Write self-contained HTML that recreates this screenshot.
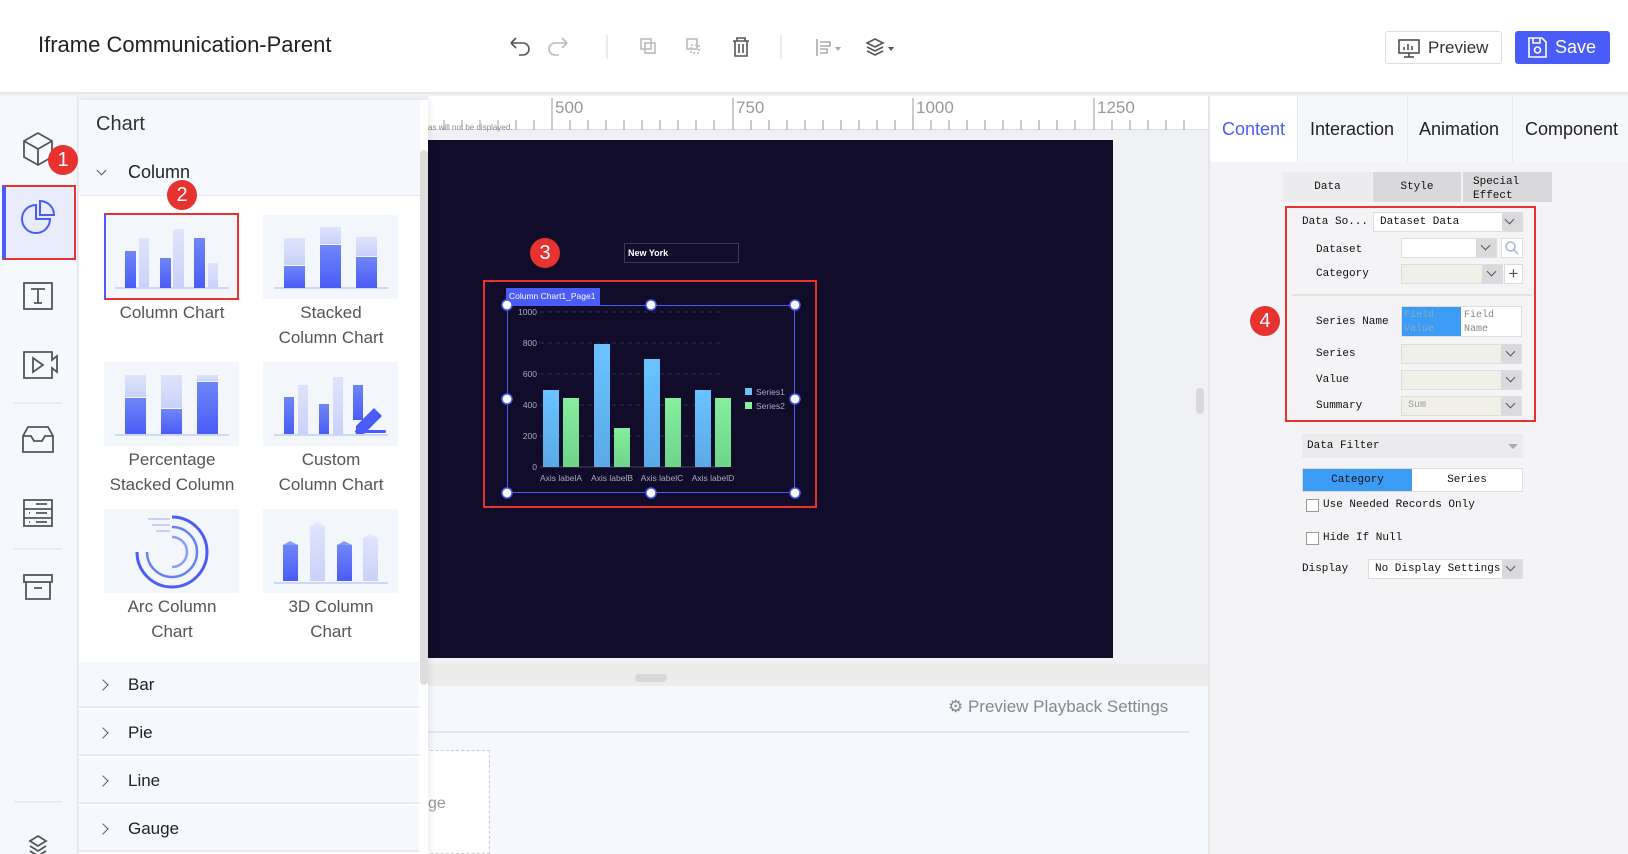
<!DOCTYPE html>
<html><head><meta charset="utf-8"><style>
*{box-sizing:border-box;margin:0;padding:0}
body{width:1628px;height:854px;overflow:hidden;background:#f0f1f4;font-family:"Liberation Sans",sans-serif;position:relative}
.a{position:absolute}
.mono{font-family:"Liberation Mono","Noto Serif CJK SC",monospace;font-size:11px;color:#111}
.badge{position:absolute;width:30px;height:30px;border-radius:50%;background:#e8322f;color:#fff;font-size:20px;text-align:center;line-height:30px}
.sel{position:absolute;background:#f1f0e8;border:1px solid #ddd}
.sel:after{content:"";position:absolute;right:0;top:0;width:20px;height:100%;background:#dadadd}
.chev{position:absolute;width:7px;height:7px;border-right:1.3px solid #555;border-bottom:1.3px solid #555;transform:rotate(45deg)}
.thumb{position:absolute;width:135px;height:84px;background:#f3f6fb}
.lbl{position:absolute;width:160px;text-align:center;font-size:17px;color:#555;line-height:25px}
.acc{position:absolute;left:79px;width:340px;height:46px;background:#f5f8fc;border-bottom:2px solid #e6e9ee;font-size:17px;color:#222;line-height:46px;padding-left:49px}
.acc i{position:absolute;left:20px;top:19px;width:8px;height:8px;border-right:1.3px solid #555;border-top:1.3px solid #555;transform:rotate(45deg)}
</style></head><body>
<svg width="0" height="0" style="position:absolute"><defs><linearGradient id="d" x1="0" y1="0" x2="0" y2="1"><stop offset="0" stop-color="#6f86f7"/><stop offset="1" stop-color="#4a5cf7"/></linearGradient><linearGradient id="l" x1="0" y1="0" x2="0" y2="1"><stop offset="0" stop-color="#dfe4fb"/><stop offset="1" stop-color="#c9d1fa"/></linearGradient><linearGradient id="b1" x1="0" y1="0" x2="0" y2="1"><stop offset="0" stop-color="#6ac3ff"/><stop offset="1" stop-color="#5aa9e6"/></linearGradient><linearGradient id="g1" x1="0" y1="0" x2="0" y2="1"><stop offset="0" stop-color="#86ee9e"/><stop offset="1" stop-color="#6dd489"/></linearGradient></defs></svg>
<!-- top bar -->
<div class="a" style="left:0;top:0;width:1628px;height:94px;background:#fff;border-bottom:2px solid #e4e6eb"></div>
<div class="a" style="left:38px;top:32px;font-size:22px;color:#222">Iframe Communication-Parent</div>
<svg class="a" style="left:505px;top:33px" width="400" height="28" fill="none" stroke-width="1.6">
<path d="M6 10 H18 a6 6 0 0 1 0 12 H14 M6 10 l5 -5 M6 10 l5 5" stroke="#555"/>
<path d="M62 10 H50 a6 6 0 0 0 0 12 H54 M62 10 l-5 -5 M62 10 l-5 5" stroke="#bbb"/>
<line x1="102" y1="2" x2="102" y2="26" stroke="#e6e6e6"/>
<rect x="136" y="6" width="10" height="10" stroke="#bbb"/><rect x="140" y="10" width="10" height="10" stroke="#bbb"/>
<rect x="182" y="6" width="10" height="10" stroke="#bbb"/><rect x="186" y="12" width="8" height="8" stroke="#bbb" stroke-dasharray="2 2"/>
<path d="M228 8 H244 M232 8 V5 H240 V8 M230 8 V23 H242 V8 M234 11 V20 M238 11 V20" stroke="#555"/>
<line x1="276" y1="2" x2="276" y2="26" stroke="#e6e6e6"/>
<path d="M312 6 V23 M315 9 H325 V13 H315 M315 16 H322 V20 H315" stroke="#aaa"/><path d="M330 14 l3 4 l3 -4z" fill="#aaa"/>
<path d="M370 6 l8 4 l-8 4 l-8 -4z M362 14 l8 4 l8 -4 M362 18 l8 4 l8 -4" stroke="#555"/><path d="M383 14 l3 4 l3 -4z" fill="#555"/>
</svg>
<div class="a" style="left:1385px;top:31px;width:117px;height:33px;border:1px solid #ddd;border-radius:3px;background:#fff;font-size:17px;color:#333;line-height:31px;padding-left:42px">Preview</div>
<svg class="a" style="left:1397px;top:37px" width="24" height="22" fill="none" stroke="#444" stroke-width="1.5"><rect x="2" y="3" width="20" height="13"/><path d="M12 16 V20 M7 20 H17 M7 13 V10 M11 13 V7 M15 13 V9"/></svg>
<div class="a" style="left:1515px;top:31px;width:95px;height:33px;border-radius:3px;background:#4a5cf7;font-size:18px;color:#fff;line-height:33px;padding-left:40px">Save</div>
<svg class="a" style="left:1526px;top:36px" width="22" height="24" fill="none" stroke="#fff" stroke-width="1.6"><path d="M3 2 H16 L20 6 V21 H3Z M7 2 V7 H14 V2"/><circle cx="11.5" cy="14" r="3"/></svg>

<!-- ruler -->
<div class="a" style="left:428px;top:96px;width:780px;height:34px;background:#fff;border-bottom:1px solid #ddd"></div>
<svg class="a" style="left:428px;top:96px" width="780" height="34">
<g stroke="#999" stroke-width="1">
<path d="M124 2 V34 M305 2 V34 M485 2 V34 M666 2 V34"/>
<path d="M16 24V34M34 24V34M52 24V34M70 24V34M88 24V34M106 24V34M142 24V34M160 24V34M178 24V34M196 24V34M214 24V34M232 24V34M250 24V34M268 24V34M286 24V34M323 24V34M341 24V34M359 24V34M377 24V34M395 24V34M413 24V34M431 24V34M449 24V34M467 24V34M503 24V34M521 24V34M539 24V34M557 24V34M575 24V34M593 24V34M611 24V34M629 24V34M647 24V34M684 24V34M702 24V34M720 24V34M738 24V34M756 24V34"/></g>
<g font-family="Liberation Sans" font-size="17" fill="#999"><text x="127" y="17">500</text><text x="308" y="17">750</text><text x="488" y="17">1000</text><text x="669" y="17">1250</text></g>
</svg>
<div class="a" style="left:428px;top:123px;font-size:8px;color:#888">as will not be displayed.</div>
<div class="a" style="left:428px;top:140px;width:685px;height:518px;background:#100c2a"></div>
<div class="a" style="left:1196px;top:388px;width:8px;height:26px;border-radius:4px;background:#d8d8d8"></div>
<div class="a" style="left:428px;top:664px;width:780px;height:22px;background:#ececec"></div>
<div class="a" style="left:635px;top:674px;width:32px;height:8px;border-radius:4px;background:#d8d8d8"></div>
<div class="a" style="left:428px;top:686px;width:780px;height:168px;background:#f5f8fc"></div>
<div class="a" style="left:948px;top:697px;font-size:17px;color:#888">⚙ Preview Playback Settings</div>
<div class="a" style="left:428px;top:731px;width:762px;height:2px;background:#e4e6eb"></div>
<div class="a" style="left:420px;top:750px;width:70px;height:104px;border:1px dashed #ccc;border-left:none;background:#fff"></div>
<div class="a" style="left:428px;top:795px;font-size:16px;color:#999">ge</div>

<!-- canvas content -->
<div class="badge" style="left:530px;top:238px">3</div>
<div class="a" style="left:624px;top:243px;width:115px;height:20px;border:1px solid #3a3a55;color:#fff;font-size:9px;line-height:18px;padding-left:3px;font-weight:bold">New York</div>
<div class="a" style="left:483px;top:280px;width:334px;height:228px;border:2px solid #e8322f"></div>
<div class="a" style="left:506px;top:288px;width:94px;height:17px;background:#4a5cf7;color:#fff;font-size:8.5px;line-height:17px;padding-left:3px">Column Chart1_Page1</div>
<div class="a" style="left:507px;top:305px;width:288px;height:188px;border:1.5px solid #4a5cf7"></div>
<svg class="a" style="left:495px;top:295px" width="320" height="210">
<g stroke="#2a3050" stroke-dasharray="4 4"><path d="M45 17H225M45 48H225M45 79H225M45 110H225M45 141H225"/></g>
<path d="M45 172H225" stroke="#445"/>
<g font-family="Liberation Sans" font-size="8.5" fill="#aab" text-anchor="end"><text x="42" y="20">1000</text><text x="42" y="51">800</text><text x="42" y="82">600</text><text x="42" y="113">400</text><text x="42" y="144">200</text><text x="42" y="175">0</text></g>
<rect x="48" y="95" width="16" height="77" fill="url(#b1)"/><rect x="68" y="103" width="16" height="69" fill="url(#g1)"/>
<rect x="99" y="49" width="16" height="123" fill="url(#b1)"/><rect x="119" y="133" width="16" height="39" fill="url(#g1)"/>
<rect x="149" y="64" width="16" height="108" fill="url(#b1)"/><rect x="170" y="103" width="16" height="69" fill="url(#g1)"/>
<rect x="200" y="95" width="16" height="77" fill="url(#b1)"/><rect x="220" y="103" width="16" height="69" fill="url(#g1)"/>
<g font-family="Liberation Sans" font-size="8.5" fill="#aab" text-anchor="middle"><text x="66" y="186">Axis labelA</text><text x="117" y="186">Axis labelB</text><text x="167" y="186">Axis labelC</text><text x="218" y="186">Axis labelD</text></g>
<rect x="250" y="93" width="7" height="7" fill="#6ac3ff"/><rect x="250" y="107" width="7" height="7" fill="#86ee9e"/>
<g font-family="Liberation Sans" font-size="8.5" fill="#aab"><text x="261" y="100">Series1</text><text x="261" y="114">Series2</text></g>
<g fill="#fff" stroke="#4a5cf7" stroke-width="1.5"><circle cx="12" cy="10" r="5"/><circle cx="156" cy="10" r="5"/><circle cx="300" cy="10" r="5"/><circle cx="12" cy="104" r="5"/><circle cx="300" cy="104" r="5"/><circle cx="12" cy="198" r="5"/><circle cx="156" cy="198" r="5"/><circle cx="300" cy="198" r="5"/></g>
</svg>

<!-- left icon bar -->
<div class="a" style="left:0;top:96px;width:78px;height:758px;background:#f5f8fc;border-right:1px solid #e4e6eb"></div>
<div class="a" style="left:2px;top:185px;width:74px;height:75px;background:#e9edfb;border:2px solid #e8322f;border-left:4px solid #4a5cf7"></div>
<svg class="a" style="left:0;top:96px" width="78" height="758" fill="none" stroke="#555" stroke-width="1.8">
<path d="M38 37 l14 8 v16 l-14 8 l-14 -8 v-16z M24 45 l14 8 l14 -8 M38 53 v16"/>
<g stroke="#4a5cf7" stroke-width="2"><path d="M36 109 a14 14 0 1 0 14 14 h-14z"/><path d="M40 105 a14 14 0 0 1 14 14 h-14z"/></g>
<rect x="24" y="187" width="28" height="26"/><path d="M31 193 H45 M38 193 V207 M34 207 H42"/>
<path d="M24 256 H52 V264 L57 260 V276 L52 272 V282 H24Z M33 262 L43 269 L33 276Z"/>
<line x1="14" y1="307" x2="62" y2="307" stroke="#e0e0e0" stroke-width="1"/>
<path d="M28 331 H48 L53 340 V356 H23 V340Z M23 340 H31 L34 345 H42 L45 340 H53"/>
<rect x="24" y="404" width="28" height="26"/><path d="M24 413 H52 M24 422 H52 M36 408 H47 M36 417 H47 M36 426 H47 M29 417 h1 M29 426 h1"/>
<line x1="14" y1="453" x2="62" y2="453" stroke="#e0e0e0" stroke-width="1"/>
<rect x="24" y="479" width="28" height="7"/><path d="M26 486 V503 H50 V486 M34 492 H42"/>
<line x1="14" y1="706" x2="62" y2="706" stroke="#e0e0e0" stroke-width="1"/>
<path d="M38 740 l8 5 l-8 5 l-8 -5z M30 750 l8 5 l8 -5 M30 755 l8 5 l8 -5"/>
</svg>
<div class="badge" style="left:48px;top:145px">1</div>

<!-- chart panel -->
<div class="a" style="left:79px;top:100px;width:349px;height:754px;background:#fff;box-shadow:2px 0 6px rgba(0,0,0,.08)"></div>
<div class="a" style="left:79px;top:100px;width:341px;height:55px;background:#f5f8fc"></div>
<div class="a" style="left:96px;top:113px;font-size:20px;color:#333">Chart</div>
<div class="a" style="left:79px;top:155px;width:341px;height:41px;background:#f5f8fc;border-bottom:1px solid #e6e9ee"></div>
<div class="chev" style="left:98px;top:167px"></div>
<div class="a" style="left:128px;top:162px;font-size:18px;color:#222">Column</div>
<div class="a" style="left:420px;top:150px;width:8px;height:535px;background:#ddd;border-radius:4px"></div>
<!-- thumbs -->
<svg class="thumb" style="left:104px;top:215px" viewBox="0 0 135 84">
<path d="M11 73H125" stroke="#aab6fa"/>
<rect x="21" y="36" width="11" height="37" fill="url(#d)"/><rect x="35" y="23" width="10" height="50" fill="url(#l)"/><rect x="56" y="43" width="11" height="30" fill="url(#d)"/><rect x="69" y="14" width="11" height="59" fill="url(#l)"/><rect x="90" y="23" width="11" height="50" fill="url(#d)"/><rect x="104" y="48" width="10" height="25" fill="url(#l)"/>
</svg>
<div class="a" style="left:104px;top:213px;width:135px;height:87px;border:2px solid #e8322f;border-left:2px solid #4a5cf7"></div>
<svg class="thumb" style="left:263px;top:215px" viewBox="0 0 135 84">
<path d="M11 73H125" stroke="#aab6fa"/>
<rect x="21" y="23" width="21" height="27" fill="url(#l)"/><rect x="21" y="51" width="21" height="22" fill="url(#d)"/><rect x="57" y="12" width="21" height="17" fill="url(#l)"/><rect x="57" y="30" width="21" height="43" fill="url(#d)"/><rect x="93" y="22" width="21" height="19" fill="url(#l)"/><rect x="93" y="42" width="21" height="31" fill="url(#d)"/>
</svg>
<svg class="thumb" style="left:104px;top:362px" viewBox="0 0 135 84">
<path d="M11 73H125" stroke="#aab6fa"/>
<rect x="21" y="13" width="21" height="22" fill="url(#l)"/><rect x="21" y="36" width="21" height="36" fill="url(#d)"/><rect x="57" y="13" width="21" height="33" fill="url(#l)"/><rect x="57" y="47" width="21" height="25" fill="url(#d)"/><rect x="93" y="13" width="21" height="6" fill="url(#l)"/><rect x="93" y="20" width="21" height="52" fill="url(#d)"/>
</svg>
<svg class="thumb" style="left:263px;top:362px" viewBox="0 0 135 84">
<path d="M11 73H125" stroke="#aab6fa"/>
<rect x="21" y="35" width="10" height="37" fill="url(#d)"/><rect x="35" y="23" width="10" height="49" fill="url(#l)"/><rect x="56" y="42" width="10" height="30" fill="url(#d)"/><rect x="70" y="15" width="10" height="57" fill="url(#l)"/><rect x="90" y="23" width="10" height="35" fill="url(#d)"/><path d="M93 64 L111 46 L119 54 L101 72 L93 72Z" fill="#4a5cf7"/><rect x="92" y="68" width="31" height="3" rx="1.5" fill="#4a5cf7"/>
</svg>
<svg class="thumb" style="left:104px;top:509px" viewBox="0 0 135 84">
<g fill="none" stroke="#4a5cf7"><path d="M68 8 A35 35 0 1 1 33 43" stroke-width="3"/><path d="M68 18 A25 25 0 1 1 43 43" stroke-width="2.5" stroke="#6a7ef8"/><path d="M68 28 A15 15 0 0 1 68 58" stroke-width="2.5" stroke="#8b9bf9"/></g>
<g stroke="#c9d1fa" stroke-width="2"><path d="M44 10H66M48 16H66M52 22H66"/></g>
</svg>
<svg class="thumb" style="left:263px;top:509px" viewBox="0 0 135 84">
<path d="M11 74H125" stroke="#aab6fa"/>
<rect x="20" y="36" width="15" height="36" fill="url(#d)"/><path d="M20 36 l7 -4 l8 4z" fill="#8a9bf8"/>
<rect x="47" y="17" width="15" height="55" fill="url(#l)"/><path d="M47 17 l7 -4 l8 4z" fill="#e3e8fc"/>
<rect x="74" y="36" width="15" height="36" fill="url(#d)"/><path d="M74 36 l7 -4 l8 4z" fill="#8a9bf8"/>
<rect x="100" y="29" width="15" height="43" fill="url(#l)"/><path d="M100 29 l7 -4 l8 4z" fill="#e3e8fc"/>
</svg>
<div class="badge" style="left:167px;top:180px">2</div>
<div class="lbl" style="left:92px;top:300px">Column Chart</div>
<div class="lbl" style="left:251px;top:300px">Stacked<br>Column Chart</div>
<div class="lbl" style="left:92px;top:447px">Percentage<br>Stacked Column</div>
<div class="lbl" style="left:251px;top:447px">Custom<br>Column Chart</div>
<div class="lbl" style="left:92px;top:594px">Arc Column<br>Chart</div>
<div class="lbl" style="left:251px;top:594px">3D Column<br>Chart</div>
<div class="acc" style="top:662px"><i></i>Bar</div>
<div class="acc" style="top:710px"><i></i>Pie</div>
<div class="acc" style="top:758px"><i></i>Line</div>
<div class="acc" style="top:806px"><i></i>Gauge</div>

<!-- right panel -->
<div class="a" style="left:1208px;top:96px;width:420px;height:758px;background:#f4f4f6;border-left:2px solid #e6e6ea"></div>
<div class="a" style="left:1210px;top:96px;width:418px;height:66px;background:#f5f7fa"></div>
<div class="a" style="left:1210px;top:96px;width:87px;height:66px;background:#fff"></div>
<div class="a" style="left:1297px;top:96px;width:1px;height:66px;background:#e8eaee"></div>
<div class="a" style="left:1407px;top:96px;width:1px;height:66px;background:#e8eaee"></div>
<div class="a" style="left:1512px;top:96px;width:1px;height:66px;background:#e8eaee"></div>
<div class="a" style="left:1222px;top:119px;font-size:18px;color:#4a5cf7">Content</div>
<div class="a" style="left:1310px;top:119px;font-size:18px;color:#222">Interaction</div>
<div class="a" style="left:1419px;top:119px;font-size:18px;color:#222">Animation</div>
<div class="a" style="left:1525px;top:119px;font-size:18px;color:#222">Component</div>
<div class="a mono" style="left:1283px;top:172px;width:89px;height:30px;background:#ececee;text-align:center;line-height:30px">Data</div>
<div class="a mono" style="left:1373px;top:172px;width:88px;height:30px;background:#d9d9dc;text-align:center;line-height:30px">Style</div>
<div class="a mono" style="left:1463px;top:172px;width:89px;height:30px;background:#d9d9dc;padding:3px 0 0 10px;line-height:14px">Special<br>Effect</div>
<div class="a" style="left:1292px;top:294px;width:240px;height:2px;background:#e4e2dc"></div>
<div class="a" style="left:1285px;top:206px;width:251px;height:216px;border:2px solid #e8322f"></div>
<div class="a mono" style="left:1302px;top:216px">Data So...</div>
<div class="sel" style="left:1373px;top:212px;width:150px;height:20px;background:#fff"></div><div class="a mono" style="left:1380px;top:216px">Dataset Data</div>
<div class="a mono" style="left:1316px;top:244px">Dataset</div>
<div class="sel" style="left:1401px;top:238px;width:96px;height:20px;background:#fff"></div>
<div class="a" style="left:1501px;top:238px;width:22px;height:20px;background:#fff;border:1px solid #ddd"></div>
<svg class="a" style="left:1504px;top:240px" width="16" height="16" fill="none" stroke="#aab4d8" stroke-width="1.5"><circle cx="6.5" cy="6.5" r="4.5"/><path d="M10 10 L14 14"/></svg>
<div class="a mono" style="left:1316px;top:268px">Category</div>
<div class="sel" style="left:1401px;top:264px;width:102px;height:20px"></div>
<div class="a" style="left:1504px;top:264px;width:19px;height:20px;background:#fff;border:1px solid #ddd;color:#555;font-size:17px;line-height:17px;text-align:center">+</div>
<div class="a mono" style="left:1316px;top:316px">Series Name</div>
<div class="a" style="left:1401px;top:306px;width:121px;height:31px;background:#fff;border:1px solid #ddd"></div>
<div class="a mono" style="left:1402px;top:307px;width:59px;height:29px;background:#3c9cf5;color:#8ab;padding:2px;line-height:14px;font-size:10px">Field<br>Value</div>
<div class="a mono" style="left:1462px;top:307px;color:#888;padding:2px;line-height:14px;font-size:10px">Field<br>Name</div>
<div class="a mono" style="left:1316px;top:348px">Series</div>
<div class="sel" style="left:1401px;top:344px;width:121px;height:20px"></div>
<div class="a mono" style="left:1316px;top:374px">Value</div>
<div class="sel" style="left:1401px;top:370px;width:121px;height:20px"></div>
<div class="a mono" style="left:1316px;top:400px">Summary</div>
<div class="sel" style="left:1401px;top:396px;width:121px;height:20px"></div><div class="a mono" style="left:1408px;top:400px;color:#999;font-size:10px">Sum</div>
<div class="badge" style="left:1250px;top:306px">4</div>
<div class="a mono" style="left:1302px;top:434px;width:221px;height:24px;background:#ebebed;line-height:24px;padding-left:5px">Data Filter</div>
<div class="a" style="left:1508px;top:444px;border:5px solid transparent;border-top:5px solid #aaa"></div>
<div class="a" style="left:1302px;top:468px;width:221px;height:24px;background:#fff;border:1px solid #ddd"></div>
<div class="a mono" style="left:1303px;top:469px;width:109px;height:22px;background:#3c9cf5;text-align:center;line-height:22px">Category</div>
<div class="a mono" style="left:1412px;top:469px;width:110px;text-align:center;line-height:22px">Series</div>
<div class="a" style="left:1306px;top:499px;width:13px;height:13px;border:1px solid #999;background:#fff"></div>
<div class="a mono" style="left:1323px;top:499px">Use Needed Records Only</div>
<div class="a" style="left:1306px;top:532px;width:13px;height:13px;border:1px solid #999;background:#fff"></div>
<div class="a mono" style="left:1323px;top:532px">Hide If Null</div>
<div class="a mono" style="left:1302px;top:563px">Display</div>
<div class="sel" style="left:1368px;top:559px;width:155px;height:20px;background:#fff"></div><div class="a mono" style="left:1375px;top:563px">No Display Settings</div>
<div class="chev" style="left:1506px;top:216px"></div><div class="chev" style="left:1482px;top:242px"></div><div class="chev" style="left:1488px;top:268px"></div>
<div class="chev" style="left:1507px;top:348px"></div><div class="chev" style="left:1507px;top:374px"></div><div class="chev" style="left:1507px;top:400px"></div><div class="chev" style="left:1507px;top:563px"></div>
</body></html>
